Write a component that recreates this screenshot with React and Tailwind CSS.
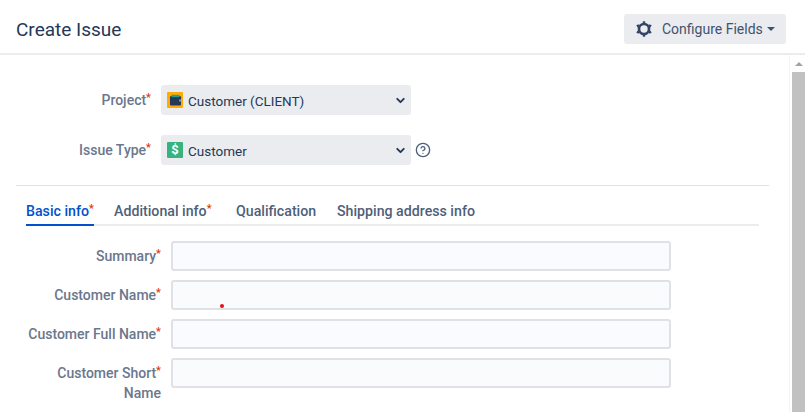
import React from "react";
import { ChevronDown, CircleHelp } from "lucide-react";

const FONT = "font-['Roboto','Noto_Sans',sans-serif]";

function Star() {
  return <span className="text-[#de350b] text-[11px] leading-none relative -top-[4px]">*</span>;
}

function Cog() {
  return (
    <svg width="16" height="16" viewBox="0 0 16 16" className="text-[#344563]">
      <circle cx="8" cy="8" r="5" fill="none" stroke="currentColor" strokeWidth="2.6" />
      <g fill="currentColor">
        <rect x="6.8" y="0.3" width="2.4" height="2.6" />
        <rect x="6.8" y="13.1" width="2.4" height="2.6" />
        <rect x="0.9" y="3.6" width="2.4" height="2.4" transform="rotate(-30 2 5)" />
        <rect x="12.7" y="3.6" width="2.4" height="2.4" transform="rotate(30 14 5)" />
        <rect x="0.9" y="10" width="2.4" height="2.4" transform="rotate(30 2 11)" />
        <rect x="12.7" y="10" width="2.4" height="2.4" transform="rotate(-30 14 11)" />
      </g>
    </svg>
  );
}

function WalletIcon() {
  return (
    <svg width="16" height="16" viewBox="0 0 16 16" className="rounded-[1px]">
      <rect width="16" height="16" fill="#ffab00" />
      <rect x="3" y="4" width="11" height="9.5" rx="1.2" fill="#253858" />
      <rect x="4.5" y="2.8" width="8" height="2.4" fill="#2a9d8f" />
      <rect x="12" y="7.5" width="2" height="2" fill="#8993a4" />
    </svg>
  );
}

function DollarIcon() {
  return (
    <span className="w-4 h-4 rounded-[1px] bg-[#36b37e] text-white text-[13px] font-bold leading-4 text-center">$</span>
  );
}

function SelectRow({ label, icon, value, help }) {
  return (
    <div className="flex items-center h-[30px]">
      <div className="w-[151px] text-right text-[14px] font-medium text-[#6b778c] whitespace-nowrap">
        {label}
        <Star />
      </div>
      <div className="ml-[10px] w-[250px] h-[30px] rounded-[3px] bg-[#ebecf0] flex items-center pl-[6px] pr-[4px]">
        {icon}
        <span className="ml-[5px] pt-[3px] flex-1 text-[13.5px] text-[#253858]">{value}</span>
        <ChevronDown size={13} strokeWidth={3.5} className="text-[#253858]" />
      </div>
      {help && <CircleHelp size={16} strokeWidth={2} className="ml-[4px] text-[#505f79]" />}
    </div>
  );
}

function Tab({ children, active, star, width }) {
  return (
    <div
      className={
        "h-[28px] -mb-[2px] border-b-2 text-[14.2px] font-medium leading-[26px] whitespace-nowrap " +
        width +
        (active ? " border-[#0052cc] text-[#0052cc]" : " border-transparent text-[#505f79]")
      }
    >
      {children}
      {star && <Star />}
    </div>
  );
}

function FieldRow({ children }) {
  return (
    <div className="flex items-start">
      <div className="w-[161px] pt-[5px] text-right text-[14px] font-medium leading-[20px] text-[#6b778c]">
        {children}
      </div>
      <div className="ml-[10px] w-[500px] h-[30px] rounded-[3px] border-2 border-[#dfe1e6] bg-[#fafbfc]" />
    </div>
  );
}

export default function App() {
  return (
    <div className={"w-[805px] h-[412px] overflow-hidden bg-white flex flex-col " + FONT}>
      <div className="h-[55px] shrink-0 border-b-2 border-[#ebecf0] flex items-center justify-between pl-4 pr-[19px] pt-[5px]">
        <h1 className="text-[19px] text-[#253858] mt-[3px]">Create Issue</h1>
        <div className="h-[30px] w-[162px] rounded-[3px] bg-[#ebecf0] flex items-center pl-[12px] text-[14px] text-[#42526e]">
          <Cog />
          <span className="ml-[10px]">Configure Fields</span>
          <span className="ml-[4px] w-0 h-0 border-x-[4px] border-x-transparent border-t-[4px] border-t-[#42526e]" />
        </div>
      </div>

      <div className="flex flex-1 min-h-0">
        <div className="relative flex-1 pt-[30px] overflow-hidden">
          <div className="flex flex-col gap-[20px]">
            <SelectRow label="Project" icon={<WalletIcon />} value="Customer (CLIENT)" />
            <SelectRow label="Issue Type" icon={<DollarIcon />} value="Customer" help />
          </div>

          <div className="ml-4 w-[753px] mt-[20px] border-t border-[#dfe1e6]" />

          <div className="ml-[26px] w-[733px] mt-[12px] border-b-2 border-[#ebecf0] flex gap-[20px]">
            <Tab active star width="w-[68px]">Basic info</Tab>
            <Tab star width="w-[102px]">Additional info</Tab>
            <Tab width="w-[81px]">Qualification</Tab>
            <Tab width="w-[138px]">Shipping address info</Tab>
          </div>

          <div className="mt-[15px] flex flex-col gap-[9px]">
            <FieldRow>Summary<Star /></FieldRow>
            <FieldRow>Customer Name<Star /></FieldRow>
            <FieldRow>Customer Full Name<Star /></FieldRow>
            <FieldRow>Customer Short<Star /><br />Name</FieldRow>
          </div>

          <div className="absolute left-[220px] top-[249px] w-1 h-1 rounded-full bg-[#e3101a]" />
        </div>

        <div className="w-[16px] shrink-0 flex flex-col pl-[2px] border-l border-[#f4f4f4]">
          <div className="h-[17px] flex items-center justify-center">
            <span className="w-0 h-0 border-x-[4px] border-x-transparent border-b-[4px] border-b-[#a3a3a3]" />
          </div>
          <div className="flex-1 bg-[#c1c1c1]" />
        </div>
      </div>
    </div>
  );
}
